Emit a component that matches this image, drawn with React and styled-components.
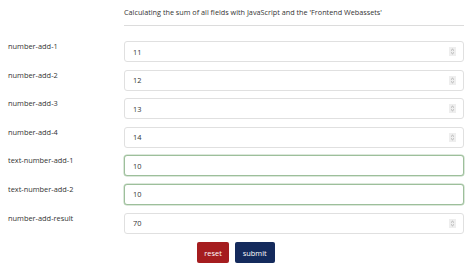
import styled, { createGlobalStyle } from "styled-components";

const GlobalStyle = createGlobalStyle`
    html, body {
        margin: 0;
        padding: 0;
        background: #ffffff;
    }
    body {
        font-family: "Open Sans", "Noto Sans", sans-serif;
        color: #333333;
    }
`;

const Page = styled.div`
    width: 474px;
    padding: 8px 10px 0 8px;
    box-sizing: border-box;
`;

const Intro = styled.div`
    margin-left: 116px;
    padding-bottom: 8px;
    border-bottom: 1px solid #dcdcdc;
    font-size: 7.25px;
    line-height: 9px;
    color: #333333;
`;

const Form = styled.form`
    display: flex;
    flex-direction: column;
    gap: 7.6px;
    margin-top: 15px;
`;

const Row = styled.div`
    display: grid;
    grid-template-columns: 116px 1fr;
    align-items: start;
`;

const Label = styled.label`
    font-size: 7.4px;
    line-height: 9px;
    padding-top: 1px;
    color: #333333;
`;

const Field = styled.div`
    position: relative;
`;

const Input = styled.input`
    display: block;
    width: 100%;
    height: 21px;
    box-sizing: border-box;
    padding: 0 8px;
    border: 1px solid ${(p) => (p.$valid ? "#9dbf9b" : "#e0e0e0")};
    border-radius: 3px;
    box-shadow: ${(p) => (p.$valid ? "0 0 0 0.5px #b9d2b7" : "none")};
    font-family: "Open Sans", "Noto Sans", sans-serif;
    font-size: 7.4px;
    color: #333333;
    background: #ffffff;
    outline: none;
`;

const Spinner = styled.svg`
    position: absolute;
    right: 8px;
    top: 6px;
    width: 7px;
    height: 9px;
`;

const Actions = styled.div`
    display: flex;
    justify-content: center;
    gap: 6px;
    margin-top: 1px;
`;

const Button = styled.button`
    height: 21px;
    padding: 0 ${(p) => p.$pad}px;
    border: none;
    border-radius: 2px;
    background: ${(p) => p.$bg};
    color: #ffffff;
    font-family: "Open Sans", "Noto Sans", sans-serif;
    font-size: 7.4px;
`;

function SpinIcon() {
    return (
        <Spinner viewBox="0 0 7 9">
            <rect x="0" y="0" width="7" height="9" fill="#eeeeee" />
            <path d="M2 3.6 L3.5 2.2 L5 3.6" stroke="#9a9a9a" strokeWidth="0.7" fill="none" />
            <path d="M2 5.4 L3.5 6.8 L5 5.4" stroke="#9a9a9a" strokeWidth="0.7" fill="none" />
        </Spinner>
    );
}

const fields = [
    { name: "number-add-1", value: "11", spin: true },
    { name: "number-add-2", value: "12", spin: true },
    { name: "number-add-3", value: "13", spin: true },
    { name: "number-add-4", value: "14", spin: true },
    { name: "text-number-add-1", value: "10", valid: true },
    { name: "text-number-add-2", value: "10", valid: true },
    { name: "number-add-result", value: "70", spin: true },
];

export default function App() {
    return (
        <Page>
            <GlobalStyle />
            <Intro>Calculating the sum of all fields with JavaScript and the 'Frontend Webassets'</Intro>
            <Form onSubmit={(e) => e.preventDefault()}>
                {fields.map((f) => (
                    <Row key={f.name}>
                        <Label htmlFor={f.name}>{f.name}</Label>
                        <Field>
                            <Input id={f.name} readOnly value={f.value} $valid={f.valid} />
                            {f.spin && <SpinIcon />}
                        </Field>
                    </Row>
                ))}
                <Actions>
                    <Button type="reset" $bg="#a51d1f" $pad={7}>reset</Button>
                    <Button type="submit" $bg="#142a5c" $pad={8}>submit</Button>
                </Actions>
            </Form>
        </Page>
    );
}
